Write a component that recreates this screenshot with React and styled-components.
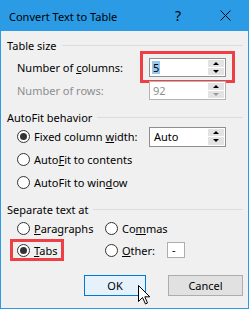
import styled, {createGlobalStyle} from 'styled-components'

const GlobalStyle = createGlobalStyle`
  html, body {
    margin: 0;
    padding: 0;
    background: #f0f0f0;
  }
  body {
    font-family: "Noto Sans", "Open Sans", sans-serif;
    font-size: 11px;
    color: #000;
  }
`

const Dialog = styled.div`
  position: relative;
  width: 249px;
  height: 309px;
  box-sizing: border-box;
  background: #f0f0f0;
  border: 1px solid #2b9be5;
  border-top: none;
  overflow: hidden;
`

const TitleBar = styled.div`
  height: 31px;
  margin: 0 -1px;
  background: #2b9be5;
  display: flex;
  align-items: center;
  padding-left: 9px;
  font-size: 11px;
`

const Title = styled.div`
  flex: 1;
  padding-top: 1px;
`

const Help = styled.div`
  width: 14px;
  font-size: 14px;
  line-height: 14px;
  margin-right: 35px;
  text-align: center;
`

const Close = styled.svg`
  width: 11px;
  height: 11px;
  margin-right: 18px;
`

const Content = styled.div`
  padding: 6px 5px 0 6px;
`

const GroupHeader = styled.div`
  height: 16px;
  display: flex;
  align-items: center;
  margin-top: ${p => p.$top || 0}px;
  &::after {
    content: '';
    flex: 1;
    height: 1px;
    background: #dcdcdc;
    margin-left: 5px;
  }
`

const SpinRows = styled.div`
  display: flex;
  flex-direction: column;
  gap: 4px;
  margin-top: 5px;
  padding-left: 10px;
`

const FieldRow = styled.div`
  display: grid;
  grid-template-columns: 132px 77px;
  align-items: center;
  height: ${p => p.$h || 19}px;
  color: ${p => (p.$disabled ? '#8d8d8d' : '#000')};
`

const SpinBox = styled.div`
  position: relative;
  height: ${p => p.$h || 19}px;
  box-sizing: border-box;
  border: 1px solid ${p => (p.$disabled ? '#b4b4b4' : '#8f8f8f')};
  background: #fff;
  display: flex;
  align-items: center;
  padding-left: ${p => p.$pad || 2}px;
  color: ${p => (p.$disabled ? '#8d8d8d' : '#000')};

  ${p =>
    p.$marked &&
    `
    &::after {
      content: '';
      position: absolute;
      left: -10px;
      top: -8px;
      width: 95px;
      height: 32px;
      box-sizing: border-box;
      border: 3px solid #ee3f47;
    }
  `}
`

const Selected = styled.span`
  background: #99c9ef;
  padding: 0 1px;
  line-height: 13px;
`

const Spinner = styled.div`
  position: absolute;
  right: 0;
  top: 0;
  bottom: 0;
  width: 17px;
  display: flex;
  flex-direction: column;
  padding: 1px 1px 1px 0;
  box-sizing: border-box;
  gap: 1px;
`

const SpinButton = styled.div`
  flex: 1;
  background: #e3e3e3;
  display: flex;
  align-items: center;
  justify-content: center;
  &::before {
    content: '';
    width: 0;
    height: 0;
    border-left: 3px solid transparent;
    border-right: 3px solid transparent;
    ${p =>
      p.$down
        ? `border-top: 3px solid ${p.$faded ? '#9a9a9a' : '#000'};`
        : `border-bottom: 3px solid #000;`}
  }
`

const RadioRows = styled.div`
  padding-left: 10px;
  display: flex;
  flex-direction: column;
`

const RadioLine = styled.div`
  height: ${p => p.$h}px;
  display: grid;
  grid-template-columns: ${p => p.$cols || '132px 77px'};
  align-items: center;
`

const Radio = styled.label`
  position: relative;
  display: flex;
  align-items: center;
  gap: 4px;
  height: 100%;
  white-space: nowrap;

  ${p =>
    p.$marked &&
    `
    &::after {
      content: '';
      position: absolute;
      left: -7px;
      top: 0;
      width: 54px;
      height: 22px;
      box-sizing: border-box;
      border: 3px solid #ee3f47;
    }
  `}
`

const Circle = styled.span`
  width: 13px;
  height: 13px;
  box-sizing: border-box;
  border-radius: 50%;
  border: 1px solid #333;
  background: #fff;
  display: flex;
  align-items: center;
  justify-content: center;
  &::before {
    content: '';
    display: ${p => (p.$checked ? 'block' : 'none')};
    width: 7px;
    height: 7px;
    border-radius: 50%;
    background: #333;
  }
`

const OtherWrap = styled.div`
  display: flex;
  align-items: center;
  gap: 12px;
`

const SmallInput = styled.div`
  width: 18px;
  height: 16px;
  box-sizing: border-box;
  border: 1px solid #adadad;
  background: #fff;
  padding-left: 4px;
  line-height: 14px;
`

const Buttons = styled.div`
  display: flex;
  justify-content: flex-end;
  gap: 22px;
  margin-top: 14px;
  padding-right: 0;
`

const Button = styled.div`
  width: ${p => p.$w}px;
  height: 21px;
  box-sizing: border-box;
  border: 1px solid ${p => (p.$primary ? '#0078d7' : '#adadad')};
  background: ${p => (p.$primary ? '#e5f1fb' : '#e1e1e1')};
  display: flex;
  align-items: center;
  justify-content: center;
`

const Cursor = styled.svg`
  position: absolute;
  left: 137px;
  top: 285px;
  width: 13px;
  height: 20px;
`

export default function App() {
  return (
    <>
      <GlobalStyle />
      <Dialog>
        <TitleBar>
          <Title>Convert Text to Table</Title>
          <Help>?</Help>
          <Close viewBox="0 0 11 11">
            <path d="M0.5 0.5 L10.5 10.5 M10.5 0.5 L0.5 10.5" stroke="#000" strokeWidth="1" />
          </Close>
        </TitleBar>
        <Content>
          <GroupHeader>Table size</GroupHeader>
          <SpinRows>
            <FieldRow>
              <span>
                Number of <u>c</u>olumns:
              </span>
              <SpinBox $marked>
                <Selected>5</Selected>
                <Spinner>
                  <SpinButton />
                  <SpinButton $down />
                </Spinner>
              </SpinBox>
            </FieldRow>
            <FieldRow $disabled>
              <span>Number of rows:</span>
              <SpinBox $disabled $pad={3}>
                92
                <Spinner>
                  <SpinButton />
                  <SpinButton $down $faded />
                </Spinner>
              </SpinBox>
            </FieldRow>
          </SpinRows>

          <GroupHeader $top={9}>AutoFit behavior</GroupHeader>
          <RadioRows>
            <RadioLine $h={23}>
              <Radio>
                <Circle $checked />
                <span>
                  Fixed column <u>w</u>idth:
                </span>
              </Radio>
              <SpinBox $h={20} $pad={4}>
                Auto
                <Spinner>
                  <SpinButton />
                  <SpinButton $down />
                </Spinner>
              </SpinBox>
            </RadioLine>
            <RadioLine $h={23}>
              <Radio>
                <Circle />
                <span>
                  Auto<u>F</u>it to contents
                </span>
              </Radio>
            </RadioLine>
            <RadioLine $h={23}>
              <Radio>
                <Circle />
                <span>
                  AutoFit to win<u>d</u>ow
                </span>
              </Radio>
            </RadioLine>
          </RadioRows>

          <GroupHeader $top={7}>Separate text at</GroupHeader>
          <RadioRows>
            <RadioLine $h={22} $cols="88px 1fr">
              <Radio>
                <Circle />
                <span>
                  <u>P</u>aragraphs
                </span>
              </Radio>
              <Radio>
                <Circle />
                <span>
                  Co<u>m</u>mas
                </span>
              </Radio>
            </RadioLine>
            <RadioLine $h={22} $cols="88px 1fr">
              <Radio $marked>
                <Circle $checked />
                <span>
                  <u>T</u>abs
                </span>
              </Radio>
              <OtherWrap>
                <Radio>
                  <Circle />
                  <span>
                    <u>O</u>ther:
                  </span>
                </Radio>
                <SmallInput>-</SmallInput>
              </OtherWrap>
            </RadioLine>
          </RadioRows>

          <Buttons>
            <Button $primary $w={62}>
              OK
            </Button>
            <Button $w={75}>Cancel</Button>
          </Buttons>
        </Content>
        <Cursor viewBox="0 0 13 20">
          <path
            d="M0.5 0.5 L0.5 16.5 L4.5 12.5 L7.5 19 L9.5 18 L6.8 11.8 L11.8 11.8 Z"
            fill="#fff"
            stroke="#000"
            strokeWidth="1"
            strokeLinejoin="miter"
          />
        </Cursor>
      </Dialog>
    </>
  )
}
